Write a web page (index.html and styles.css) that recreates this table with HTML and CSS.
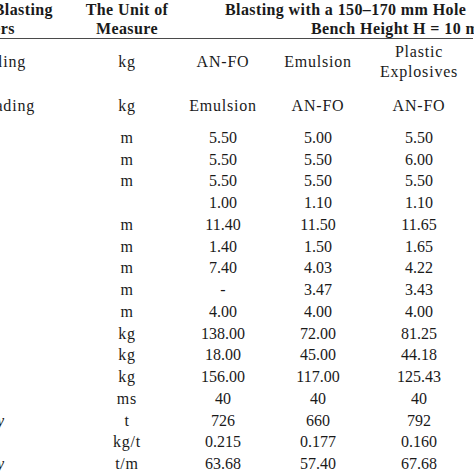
FILE: index.html
```html
<!DOCTYPE html>
<html lang="en">
<head>
<meta charset="utf-8">
<title>Blasting parameters</title>
<link rel="stylesheet" href="styles.css">
</head>
<body>
<table class="grid">
  <colgroup>
    <col class="w-param">
    <col class="w-unit">
    <col class="w-a">
    <col class="w-b">
    <col class="w-c">
  </colgroup>
  <thead>
    <tr>
      <th class="param">
        <div class="clip pad-h1"><span>Drilling and Blasting</span></div>
        <div class="clip pad-h2"><span>Parameters</span></div>
      </th>
      <th>The Unit of<br>Measure</th>
      <th colspan="3" class="group">
        <div class="g1">Blasting with a 150–170 mm Hole</div>
        <div class="g2">Bench Height H = 10 m</div>
      </th>
    </tr>
  </thead>
  <tbody>
    <tr class="r-tall">
      <td class="param"><div class="clip pad-r1"><span>Explosive for column filling</span></div></td>
      <td class="word">kg</td>
      <td class="word">AN-FO</td>
      <td class="word">Emulsion</td>
      <td class="word">Plastic<br>Explosives</td>
    </tr>
    <tr class="r-mid">
      <td class="param"><div class="clip pad-r2"><span>Explosive for bottom loading</span></div></td>
      <td class="word">kg</td>
      <td class="word">Emulsion</td>
      <td class="word">AN-FO</td>
      <td class="word">AN-FO</td>
    </tr>
    <tr><td class="param"></td><td class="word">m</td><td>5.50</td><td>5.00</td><td>5.50</td></tr>
    <tr><td class="param"></td><td class="word">m</td><td>5.50</td><td>5.50</td><td>6.00</td></tr>
    <tr><td class="param"></td><td class="word">m</td><td>5.50</td><td>5.50</td><td>5.50</td></tr>
    <tr><td class="param"></td><td class="word"></td><td>1.00</td><td>1.10</td><td>1.10</td></tr>
    <tr><td class="param"></td><td class="word">m</td><td>11.40</td><td>11.50</td><td>11.65</td></tr>
    <tr><td class="param"></td><td class="word">m</td><td>1.40</td><td>1.50</td><td>1.65</td></tr>
    <tr><td class="param"></td><td class="word">m</td><td>7.40</td><td>4.03</td><td>4.22</td></tr>
    <tr><td class="param"></td><td class="word">m</td><td>-</td><td>3.47</td><td>3.43</td></tr>
    <tr><td class="param"></td><td class="word">m</td><td>4.00</td><td>4.00</td><td>4.00</td></tr>
    <tr><td class="param"></td><td class="word">kg</td><td>138.00</td><td>72.00</td><td>81.25</td></tr>
    <tr><td class="param"></td><td class="word">kg</td><td>18.00</td><td>45.00</td><td>44.18</td></tr>
    <tr><td class="param"></td><td class="word">kg</td><td>156.00</td><td>117.00</td><td>125.43</td></tr>
    <tr><td class="param"></td><td class="word">ms</td><td>40</td><td>40</td><td>40</td></tr>
    <tr><td class="param"><div class="clip pad-y"><span>Rock volume per hole, <i>Qy</i></span></div></td><td class="word">t</td><td>726</td><td>660</td><td>792</td></tr>
    <tr><td class="param"></td><td class="word">kg/t</td><td>0.215</td><td>0.177</td><td>0.160</td></tr>
    <tr><td class="param"><div class="clip pad-y"><span>Rock per meter of hole, <i>Qy</i></span></div></td><td class="word">t/m</td><td>63.68</td><td>57.40</td><td>67.68</td></tr>
  </tbody>
</table>
</body>
</html>
```

FILE: styles.css
```css
html, body {
  margin: 0;
  padding: 0;
  overflow: hidden;
  background: #ffffff;
}

body {
  font-family: "Liberation Serif", "Times New Roman", serif;
  font-size: 16px;
  color: #1a1a1a;
}

.grid {
  table-layout: fixed;
  border-collapse: collapse;
  border-spacing: 0;
  width: 473px;
}

.w-param { width: 79px; }
.w-unit { width: 96px; }
.w-a { width: 96px; }
.w-b { width: 94px; }
.w-c { width: 108px; }

th {
  font-weight: bold;
  line-height: 19px;
  letter-spacing: 0.4px;
  padding: 0;
  text-align: center;
  vertical-align: top;
  white-space: nowrap;
  border-bottom: 1px solid #4a4a4a;
}

th.group {
  text-align: left;
}

.g1 { padding-left: 50px; }
.g2 { padding-left: 136px; }

td {
  padding: 0.875px 0;
  line-height: 20px;
  text-align: center;
  vertical-align: middle;
  letter-spacing: 0;
  white-space: nowrap;
}

td.word { letter-spacing: 0.8px; }

.r-tall td { padding: 3px 0; }
.r-mid td { padding: 11px 0; }

.param { padding-left: 0; padding-right: 0; }

.clip {
  display: flex;
  justify-content: flex-end;
  overflow: hidden;
  width: 79px;
  box-sizing: border-box;
}

.clip span {
  flex-shrink: 0;
  white-space: nowrap;
}

th .clip span { letter-spacing: 0.4px; }
td .clip span { letter-spacing: 0.8px; }

.pad-h1 { padding-right: 26px; }
.pad-h2 { padding-right: 64px; }
.pad-r1 { padding-right: 53px; }
.pad-r2 { padding-right: 44px; }
.pad-y { padding-right: 74px; }
```
